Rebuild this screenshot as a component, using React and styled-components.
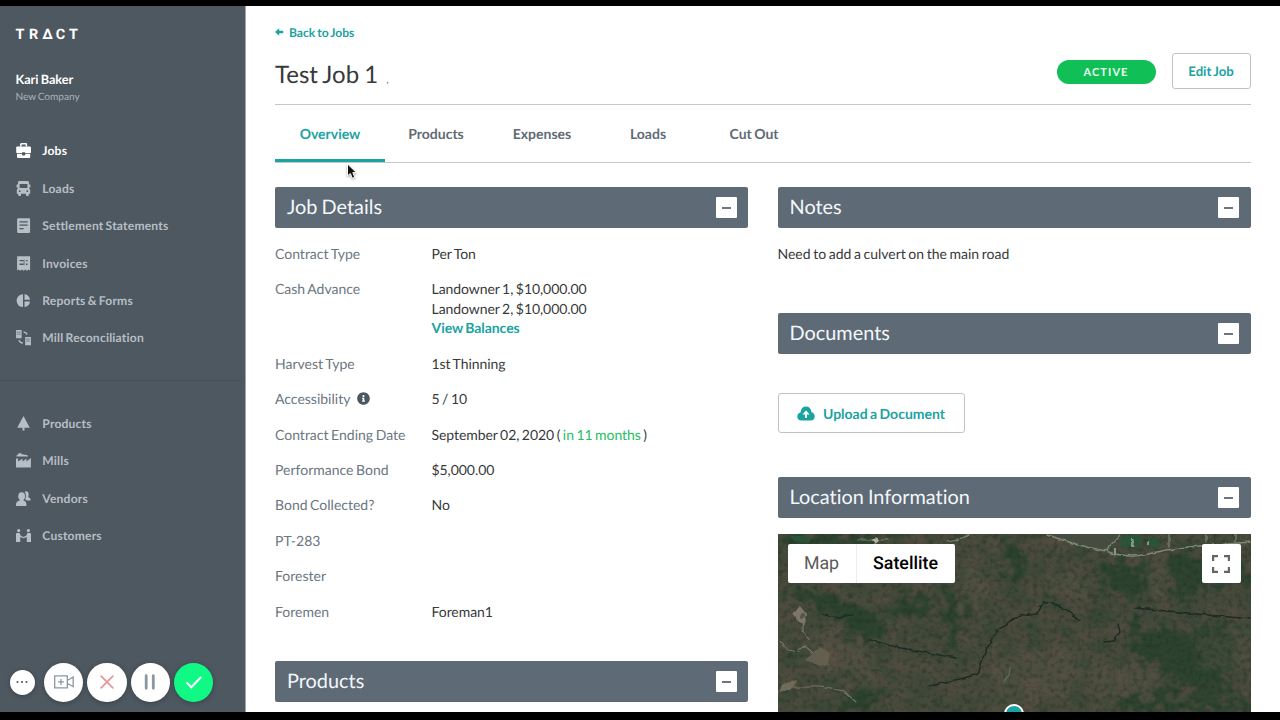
import React from 'react';
import styled, { createGlobalStyle } from 'styled-components';
import { FaInfoCircle } from 'react-icons/fa';

const GlobalStyle = createGlobalStyle`
  * {
    box-sizing: border-box;
  }
  body {
    margin: 0;
    overflow: hidden;
    background: #000;
    font-family: Lato, 'Liberation Sans', sans-serif;
    font-variant-ligatures: none;
    text-rendering: geometricPrecision;
    word-spacing: -1px;
  }
`;

const Screen = styled.div`
  position: relative;
  display: flex;
  width: 1280px;
  height: 720px;
  padding: 6px 0 8px;
  background: #000;
`;

const Sidebar = styled.aside`
  display: flex;
  flex-direction: column;
  flex: none;
  width: 246px;
  background: #4e5860;
  border-right: 1px solid #a2a6a8;
`;

const Logo = styled.div`
  display: flex;
  padding: 19px 0 0 15.5px;
  height: 64px;
  color: #fff;
  font: 700 14.4px/20px Roboto, sans-serif;
`;

const LogoLetter = styled.span`
  width: 13.4px;
`;

const UserName = styled.div`
  padding-left: 15.5px;
  color: #fff;
  font-size: 12.7px;
  font-weight: 700;
  line-height: 19px;
`;

const Company = styled.div`
  padding-left: 15.5px;
  color: #aab1b8;
  font-size: 10.1px;
  line-height: 16px;
`;

const Nav = styled.nav`
  display: flex;
  flex-direction: column;
  padding: ${(p) => p.$padding};
`;

const NavItem = styled.a`
  display: flex;
  align-items: center;
  gap: 11.8px;
  height: 37.4px;
  padding-left: 15.5px;
  color: ${(p) => (p.$active ? '#fff' : '#b6bec6')};
  font-size: 12.1px;
  font-weight: 700;
  letter-spacing: 0.19px;

  svg {
    flex: none;
  }
`;

const Divider = styled.div`
  height: 1px;
  margin-right: 4px;
  background: #465058;
`;

const Main = styled.main`
  flex: 1;
  overflow: hidden;
  padding: 0 29.5px 0 29px;
  background: #fff;
`;

const BackLink = styled.a`
  display: flex;
  align-items: center;
  gap: 5px;
  height: 20px;
  margin-top: 16px;
  color: #1ba3a2;
  font-size: 12.1px;
  font-weight: 700;
`;

const PageHeader = styled.header`
  display: flex;
  align-items: center;
  height: 63px;
  padding-bottom: 4px;
  border-bottom: 1px solid #c3c8ca;
`;

const Title = styled.h1`
  flex: 1;
  margin: 0;
  padding-top: 7px;
  color: #37393b;
  font-size: 24px;
  font-weight: 400;

  small {
    margin-left: 8px;
    color: #777;
    font-size: 11px;
  }
`;

const Status = styled.span`
  width: 99px;
  height: 24px;
  margin: 2px 16px 0 0;
  border-radius: 12px;
  background: #10bf55;
  color: #e9fff1;
  font-size: 11px;
  font-weight: 700;
  line-height: 25px;
  letter-spacing: 1.1px;
  text-align: center;
`;

const Button = styled.button`
  display: flex;
  align-items: center;
  justify-content: center;
  gap: 8px;
  width: ${(p) => p.$width}px;
  height: ${(p) => p.$height}px;
  padding: 0;
  border: 1px solid #c0c3c5;
  border-radius: 3px;
  background: #fff;
  color: #1ba3a2;
  font-family: inherit;
  font-size: ${(p) => p.$size}px;
  font-weight: 700;
  text-rendering: inherit;
  word-spacing: inherit;
`;

const Tabs = styled.div`
  display: flex;
  height: 58px;
  border-bottom: 1px solid #c3c8ca;
`;

const Tab = styled.div`
  width: 110px;
  height: 57px;
  margin-right: -4px;
  border-bottom: ${(p) => (p.$active ? '3px solid #1ba3a2' : '0')};
  color: ${(p) => (p.$active ? '#1ba3a2' : '#5f6b75')};
  font-size: 14px;
  font-weight: 700;
  line-height: 57px;
  text-align: center;
`;

const Columns = styled.div`
  display: grid;
  grid-template-columns: 1fr 1fr;
  column-gap: 29.5px;
  margin-top: 24px;
`;

const PanelHeader = styled.div`
  display: flex;
  align-items: center;
  justify-content: space-between;
  height: 41px;
  padding: 0 11.5px 0 12px;
  border-radius: 2px;
  background: #5e6a75;
  color: #f2f7fb;
  font-size: 19.9px;
  line-height: 43px;
`;

const Collapse = styled.span`
  display: flex;
  align-items: center;
  justify-content: center;
  width: 21px;
  height: 21px;
  border-radius: 1px;
  background: #fff;

  &::before {
    content: '';
    width: 9px;
    height: 2px;
    background: #6b7681;
  }
`;

const Details = styled.dl`
  display: flex;
  flex-direction: column;
  gap: 15.7px;
  height: 433px;
  margin: 0;
  padding-top: 15.7px;
  font-size: 14px;
  line-height: 19.7px;
`;

const DetailRow = styled.div`
  display: grid;
  grid-template-columns: 156.5px 1fr;
  min-height: 19.7px;
`;

const Label = styled.dt`
  color: #6b7681;

  svg {
    margin-left: 4px;
    color: #4b5762;
    vertical-align: -0.5px;
  }
`;

const Value = styled.dd`
  margin: 0;
  color: #37393b;
  letter-spacing: -0.06px;
`;

const Link = styled.a`
  color: #1ba3a2;
  font-weight: 700;
`;

const DueIn = styled.span`
  color: #21bf5f;
`;

const Note = styled.p`
  height: 85px;
  margin: 0;
  padding-top: 15.7px;
  color: #37393b;
  font-size: 14px;
  line-height: 19.7px;
`;

const Documents = styled.div`
  height: 123px;
  padding-top: 39px;
`;

const MapView = styled.div`
  position: relative;
  display: flex;
  justify-content: space-between;
  align-items: flex-start;
  height: 178px;
  margin-top: 16px;
  padding: 10px;
  overflow: hidden;
`;

const Terrain = styled.svg`
  position: absolute;
  inset: 0;
`;

const MapTypes = styled.div`
  position: relative;
  display: flex;
  height: 39px;
  border-radius: 2px;
  background: #fff;
`;

const MapType = styled.span`
  width: ${(p) => p.$width}px;
  border-left: ${(p) => (p.$active ? '1px solid #ececec' : '0')};
  color: ${(p) => (p.$active ? '#000' : '#5a5a5a')};
  font: ${(p) => (p.$active ? 500 : 400)} 17.8px/39px Roboto, sans-serif;
  text-align: center;
`;

const Fullscreen = styled.div`
  position: relative;
  display: flex;
  align-items: center;
  justify-content: center;
  width: 39px;
  height: 39px;
  border-radius: 2px;
  background: #fff;
`;

const Pin = styled.span`
  position: absolute;
  left: 226px;
  top: 169.5px;
  width: 20px;
  height: 20px;
  border: 2px solid #fff;
  border-radius: 50%;
  background: #1ba3a2;
`;

const Cursor = styled.svg`
  position: absolute;
  left: 346px;
  top: 162px;
  filter: drop-shadow(0 1px 1px rgba(0, 0, 0, 0.35));
`;

const Recorder = styled.div`
  position: absolute;
  left: 9.5px;
  top: 662.7px;
  display: flex;
  align-items: center;
  gap: 4px;
`;

const RoundButton = styled.span`
  display: flex;
  align-items: center;
  justify-content: center;
  width: ${(p) => p.$size}px;
  height: ${(p) => p.$size}px;
  margin-right: ${(p) => p.$space || 0}px;
  border-radius: 50%;
  background: ${(p) => p.$color || '#fff'};
  box-shadow: 0 1px 5px rgba(0, 0, 0, 0.25);
`;

const DARK = '#4e5860';

// 15x15 sidebar glyphs, filled with the colour of their row
const glyphs = {
  jobs: (
    <>
      <path d="M4.8 3.6V1.3Q4.8.8 5.3.8H9.9Q10.4.8 10.4 1.3V3.6" fill="none" stroke="currentColor" strokeWidth="1.5" />
      <path d="M1.4 3.4H13.8Q15 3.4 15 4.6V9.2Q15 10.3 13.8 10.3H1.4Q.2 10.3.2 9.2V4.6Q.2 3.4 1.4 3.4Z" />
      <path d="M1 11H14.2V13.9Q14.2 15 13.1 15H2.1Q1 15 1 13.9Z" />
      <rect x="5.9" y="9.2" width="3.4" height="3.2" rx=".8" fill={DARK} />
    </>
  ),
  loads: (
    <>
      <path d="M3.2 0H11.8Q13 0 13 1.5V3.4H14.4V6.4H13.2V7.6Q14.2 8.3 14.2 9.3V12.8H12.8V14.3Q12.8 15 12.1 15H10.7Q10 15 10 14.3V12.8H5V14.3Q5 15 4.3 15H2.9Q2.2 15 2.2 14.3V12.8H.8V9.3Q.8 8.3 1.8 7.6V6.4H.6V3.4H2V1.5Q2 0 3.2 0Z" />
      <rect x="3.6" y="2.9" width="7.8" height="4.1" rx=".6" fill={DARK} />
      <circle cx="3.7" cy="10.2" r=".9" fill={DARK} />
      <circle cx="11.3" cy="10.2" r=".9" fill={DARK} />
    </>
  ),
  statements: (
    <>
      <rect x="1.1" y=".2" width="13" height="14.7" rx="1.2" />
      <path d="M3.5 3.8H11.7M3.5 7.2H11.7M3.5 10.7H7.6" stroke={DARK} strokeWidth="1.3" />
    </>
  ),
  invoices: (
    <>
      <path d="M1.1 .3H14.1V14.6L12.5 13.4L10.8 14.8L9.2 13.4L7.6 14.8L6 13.4L4.3 14.8L2.7 13.4L1.1 14.6Z" />
      <path d="M3.5 4.6H7.6M3.5 8.2H7.6M9.9 4.6H11.6M9.9 8.2H11.6" stroke={DARK} strokeWidth="1.4" />
      <path d="M8.1 3.5V9.4" stroke={DARK} strokeWidth=".7" />
    </>
  ),
  reports: (
    <>
      <path d="M7 1.2A6.4 6.4 0 0 0 7 14Z" />
      <path d="M8.5 1.2A6.4 6.4 0 0 1 14 6.8H8.5Z" />
      <path d="M8.5 8.4H14A6.4 6.4 0 0 1 8.5 14Z" />
    </>
  ),
  reconcile: (
    <>
      <path d="M.1 .1H5.6V8.3H.1ZM9.2 7H15V15.3H9.2Z" />
      <path d="M.8 2.2H4.8M.8 4.2H4.8M10 9.1H14.3M10 11.1H14.3" stroke={DARK} strokeWidth=".6" />
      <path d="M7.6 2Q10.3 2.2 11.2 4.6M2.9 10.2Q4 12.8 6.8 13" fill="none" stroke="currentColor" strokeWidth="1.5" />
    </>
  ),
  products: <path d="M7.5 0L13.8 11.7H8.5V14.6H6.5V11.7H1.2Z" />,
  mills: (
    <>
      <path d="M.5 3.6Q.3 1.7 2 1.5Q2.8-.2 4.6.2Q5.8.4 6.2 1.4Q7.4 1 8.4 1.8Q12 1.3 12.2 3.6Z" />
      <path d="M0 5.4H2.2V8.6L6.6 5.4V8.6L10.5 5.4V8.6L14.9 5.1V14.6H0Z" />
    </>
  ),
  vendors: (
    <>
      <ellipse cx="5.6" cy="5.2" rx="3.4" ry="4" />
      <path d="M3.8 8H7.4V9.5Q10.2 10.2 10.4 13.2V15H0V13.2Q.4 10.2 3.8 9.5Z" />
      <path d="M8.6 .8Q11.5-.8 12.6 2Q12.9 4.4 12.2 6Q14.8 6.6 14.8 9.4H10.5L9.2 8.2Q10.8 4 8.6 .8Z" />
    </>
  ),
  customers: (
    <>
      <circle cx="2.7" cy="2.6" r="1.6" />
      <circle cx="12.4" cy="2.6" r="1.6" />
      <path d="M.9 5.1H3.6L4.6 7.6L7.4 8.9L10.4 7.6L11.4 5.1H14Q15 5.1 15 6V14H10.8V9.1L7.5 10.3L4.3 9.1V14H0V6Q0 5.1.9 5.1Z" />
    </>
  ),
};

const primaryNav = [
  ['jobs', 'Jobs'],
  ['loads', 'Loads'],
  ['statements', 'Settlement Statements'],
  ['invoices', 'Invoices'],
  ['reports', 'Reports & Forms'],
  ['reconcile', 'Mill Reconciliation'],
];

const secondaryNav = [
  ['products', 'Products'],
  ['mills', 'Mills'],
  ['vendors', 'Vendors'],
  ['customers', 'Customers'],
];

const tabs = ['Overview', 'Products', 'Expenses', 'Loads', 'Cut Out'];

const details = [
  ['Contract Type', 'Per Ton'],
  [
    'Cash Advance',
    <>
      Landowner 1, $10,000.00
      <br />
      Landowner 2, $10,000.00
      <br />
      <Link>View Balances</Link>
    </>,
  ],
  ['Harvest Type', '1st Thinning'],
  [
    <>
      Accessibility <FaInfoCircle size={13} />
    </>,
    '5 / 10',
  ],
  [
    'Contract Ending Date',
    <>
      September 02, 2020 ( <DueIn>in 11 months</DueIn> )
    </>,
  ],
  ['Performance Bond', '$5,000.00'],
  ['Bond Collected?', 'No'],
  ['PT-283', ''],
  ['Forester', ''],
  ['Foremen', 'Foreman1'],
];

function NavList({ items, active, padding }) {
  return (
    <Nav $padding={padding}>
      {items.map(([icon, label]) => (
        <NavItem key={icon} $active={icon === active}>
          <svg width="15" height="15" viewBox="0 0 15 15" fill="currentColor" overflow="visible">
            {glyphs[icon]}
          </svg>
          {label}
        </NavItem>
      ))}
    </Nav>
  );
}

function Panel({ title, children }) {
  return (
    <section>
      <PanelHeader>
        {title}
        <Collapse />
      </PanelHeader>
      {children}
    </section>
  );
}

function Satellite() {
  return (
    <Terrain width="473" height="178" viewBox="0 0 473 178">
      <defs>
        <filter id="patches" x="0" y="0" width="100%" height="100%" colorInterpolationFilters="sRGB">
          <feTurbulence type="fractalNoise" baseFrequency="0.045 0.055" numOctaves="5" seed="21" />
          <feColorMatrix values="0.2 0 0 0 0.175  0.04 0 0 0 0.27  0.08 0 0 0 0.19  0 0 0 0 1" />
        </filter>
        <filter id="grain" x="0" y="0" width="100%" height="100%" colorInterpolationFilters="sRGB">
          <feTurbulence type="fractalNoise" baseFrequency="0.2" numOctaves="4" seed="3" />
          <feColorMatrix values="0 0 0 0 0.12  0 0 0 0 0.18  0 0 0 0 0.13  0 2.2 0 0 -1" />
        </filter>
        <filter id="soft" x="-20%" y="-20%" width="140%" height="140%">
          <feTurbulence type="fractalNoise" baseFrequency="0.08" numOctaves="4" seed="5" result="n" />
          <feDisplacementMap in="SourceGraphic" in2="n" scale="44" xChannelSelector="R" yChannelSelector="G" />
          <feGaussianBlur stdDeviation="1.8" />
        </filter>
        <filter id="rough" x="-5%" y="-5%" width="110%" height="110%">
          <feTurbulence type="fractalNoise" baseFrequency="0.12" numOctaves="2" seed="2" result="n" />
          <feDisplacementMap in="SourceGraphic" in2="n" scale="4" xChannelSelector="R" yChannelSelector="G" />
          <feGaussianBlur stdDeviation="0.6" />
        </filter>
      </defs>
      <rect width="473" height="178" fill="#484b40" />
      <rect width="473" height="178" filter="url(#patches)" opacity="0.8" />
      <g filter="url(#soft)" fill="#243f2c" opacity="0.7">
        <path d="M12 50L45 58L82 74L112 97L105 110L80 102L50 78L18 64Z" />
        <path d="M165 55L186 62L184 110L166 115Z" />
        <path d="M226 4L248 12L246 42L230 38Z" />
        <path d="M320 28L372 30L360 62L322 58Z" />
        <path d="M392 20L473 30V52L440 44L400 70Z" />
        <path d="M350 88L410 98L460 90L455 150L430 165L385 140L352 110Z" />
        <path d="M345 165L400 160L473 168V178H340Z" />
        <path d="M0 0H120L90 12L30 14L0 8Z" />
        <path d="M110 70L150 60L158 75L125 82Z" />
        <path d="M70 155L100 158L96 178H60Z" />
      </g>
      <g filter="url(#soft)" fill="#62594b" opacity="0.35">
        <path d="M368 38L392 34L384 68L372 66Z" />
        <path d="M270 40L300 38L312 62L280 65Z" />
        <path d="M215 115L310 120L290 165L220 170Z" />
        <path d="M185 25L210 45L205 85L190 80Z" />
        <path d="M310 130L372 128L380 160L320 165Z" />
        <path d="M415 105L473 90V140L430 130Z" />
        <path d="M30 92L90 110L100 145L40 140Z" />
      </g>
      <rect width="473" height="178" filter="url(#grain)" opacity="0.55" />
      <path d="M278 0H342L330 17Q305 14 270 1Z" fill="#454d40" />
      <g filter="url(#rough)" fill="none" strokeLinecap="round">
        <path d="M44 80L57 84L67 82L76 80M92 106L118 113L150 119L178 124" stroke="#1b2b24" strokeWidth="1.3" />
        <path d="M150 153L164 149L182 145L200 140L205 125L209 113L220 97L237 83L258 80L265 68L275 70L288 76L302 87M340 90L342 98L336 107L326 108" stroke="#1a2a22" strokeWidth="1.4" />
        <path d="M357 74L390 77L420 80L473 85" stroke="#1a2a22" strokeWidth="1.3" />
        <path d="M270 1Q300 12 328 17Q345 24 366 21Q390 15 410 13L473 8" stroke="#7c8974" strokeWidth="1.5" />
        <path d="M328 16L342 1M170 8Q182 6 191 0M80 6H110M391 12V0M428 8V0M457 8V0" stroke="#7a8575" strokeWidth="1.2" />
        <path d="M2 107L10 116L20 118L27 112L35 119M0 158L14 153L42 153L66 157L78 168M26 84L25 96L30 105" stroke="#757565" strokeWidth="1.1" />
        <path d="M226 148L231 141L232 134" stroke="#5a694f" strokeWidth="1.4" />
      </g>
      <g filter="url(#rough)">
        <path d="M15 80L22 72L29 81L27 91L20 88Z" fill="#7d7567" />
        <circle cx="24" cy="82" r="3" fill="#57544a" />
        <path d="M28 126L43 112L52 120L50 130L42 132Z" fill="#625e4f" />
        <path d="M5 150L19 146L14 155L2 158Z" fill="#716a58" />
        <path d="M94 6L98 2L101 7L97 10Z" fill="#b2afa0" />
        <path d="M8 1L35 3L31 9L16 7ZM342 5L354 0L366 3L360 13L344 12ZM368 4L380 3L383 12L370 12Z" fill="#2c5339" />
        <path d="M353 5H355.5V13H353ZM369 8H371V12H369ZM336 14H338V19H336Z" fill="#85988a" />
      </g>
    </Terrain>
  );
}

function App() {
  return (
    <Screen>
      <GlobalStyle />
      <Sidebar>
        <Logo>
          {['T', 'R', 'Δ', 'C', 'T'].map((letter, i) => (
            <LogoLetter key={i}>{letter}</LogoLetter>
          ))}
        </Logo>
        <UserName>Kari Baker</UserName>
        <Company>New Company</Company>
        <NavList items={primaryNav} active="jobs" padding="27.2px 0 23.8px" />
        <Divider />
        <NavList items={secondaryNav} padding="23.4px 0 0" />
      </Sidebar>

      <Main>
        <BackLink>
          <svg width="9" height="8" viewBox="0 0 9 8" fill="currentColor">
            <path d="M0 4L4.2 .3V2.7H8.2V5.3H4.2V7.7Z" />
          </svg>
          Back to Jobs
        </BackLink>
        <PageHeader>
          <Title>
            Test Job 1<small>,</small>
          </Title>
          <Status>ACTIVE</Status>
          <Button $width={79} $height={36} $size={13.2}>
            Edit Job
          </Button>
        </PageHeader>
        <Tabs>
          {tabs.map((tab, i) => (
            <Tab key={tab} $active={i === 0}>
              {tab}
            </Tab>
          ))}
        </Tabs>

        <Columns>
          <div>
            <Panel title="Job Details">
              <Details>
                {details.map(([label, value], i) => (
                  <DetailRow key={i}>
                    <Label>{label}</Label>
                    <Value>{value}</Value>
                  </DetailRow>
                ))}
              </Details>
            </Panel>
            <Panel title="Products" />
          </div>
          <div>
            <Panel title="Notes">
              <Note>Need to add a culvert on the main road</Note>
            </Panel>
            <Panel title="Documents">
              <Documents>
                <Button $width={187} $height={40} $size={14}>
                  <svg width="18" height="15" viewBox="0 0 18 15">
                    <path
                      d="M4.6 14.5Q.3 14.2.3 10.4Q.4 7.2 3.5 6.4Q4.2.5 9 .5Q13.8.5 14.5 6.2Q17.7 7 17.7 10.4Q17.6 14.2 13.4 14.5Z"
                      fill="currentColor"
                    />
                    <path d="M9 4.6L12.6 8.5H10V12H8V8.5H5.4Z" fill="#fff" />
                  </svg>
                  Upload a Document
                </Button>
              </Documents>
            </Panel>
            <Panel title="Location Information">
              <MapView>
                <Satellite />
                <MapTypes>
                  <MapType $width={68}>Map</MapType>
                  <MapType $width={99} $active>
                    Satellite
                  </MapType>
                </MapTypes>
                <Fullscreen>
                  <svg width="18" height="18" viewBox="0 0 18 18" fill="none" stroke="#666" strokeWidth="2.2">
                    <path d="M1.1 6V1.1H6M12 1.1H16.9V6M16.9 12V16.9H12M6 16.9H1.1V12" />
                  </svg>
                </Fullscreen>
                <Pin />
              </MapView>
            </Panel>
          </div>
        </Columns>
      </Main>

      <Cursor width="12" height="18" viewBox="0 0 12 18">
        <path d="M1.5 2V14L4.3 11.5L6.4 16.3L8.8 15.2L6.8 10.6H10.4Z" fill="#111" stroke="#fff" strokeWidth="1" />
      </Cursor>

      <Recorder>
        <RoundButton $size={25} $space={5.5}>
          <svg width="12" height="4" viewBox="0 0 12 4" fill="#555b61">
            <circle cx="1.5" cy="2" r="1.1" />
            <circle cx="6" cy="2" r="1.1" />
            <circle cx="10.5" cy="2" r="1.1" />
          </svg>
        </RoundButton>
        <RoundButton $size={39.3}>
          <svg width="20" height="14" viewBox="0 0 20 14" fill="none" stroke="#8b98a1" strokeWidth="1.3">
            <path d="M.7 .8H13.3V12.9H.7ZM13.3 5.3L15.5 4.3L19.2 2V11.7L15.5 9.5L13.3 8.7M4 6.9H10M7 3.9V9.9" />
          </svg>
        </RoundButton>
        <RoundButton $size={39.3}>
          <svg width="14" height="14" viewBox="0 0 14 14" stroke="#e29a9d" strokeWidth="1.8" strokeLinecap="round">
            <path d="M1.2 1.2L12.8 12.8M12.8 1.2L1.2 12.8" />
          </svg>
        </RoundButton>
        <RoundButton $size={39.3}>
          <svg width="12" height="16" viewBox="0 0 12 16" stroke="#8b98a1" strokeWidth="2.8" strokeLinecap="round">
            <path d="M2.2 1.7V14.3M9.3 1.7V14.3" />
          </svg>
        </RoundButton>
        <RoundButton $size={39.3} $color="#10f985">
          <svg width="16" height="13" viewBox="0 0 16 13" fill="none" stroke="#fff" strokeWidth="2" strokeLinecap="round">
            <path d="M1.2 7L5.3 11.3L14.6 1.5" />
          </svg>
        </RoundButton>
      </Recorder>
    </Screen>
  );
}

export default App;
